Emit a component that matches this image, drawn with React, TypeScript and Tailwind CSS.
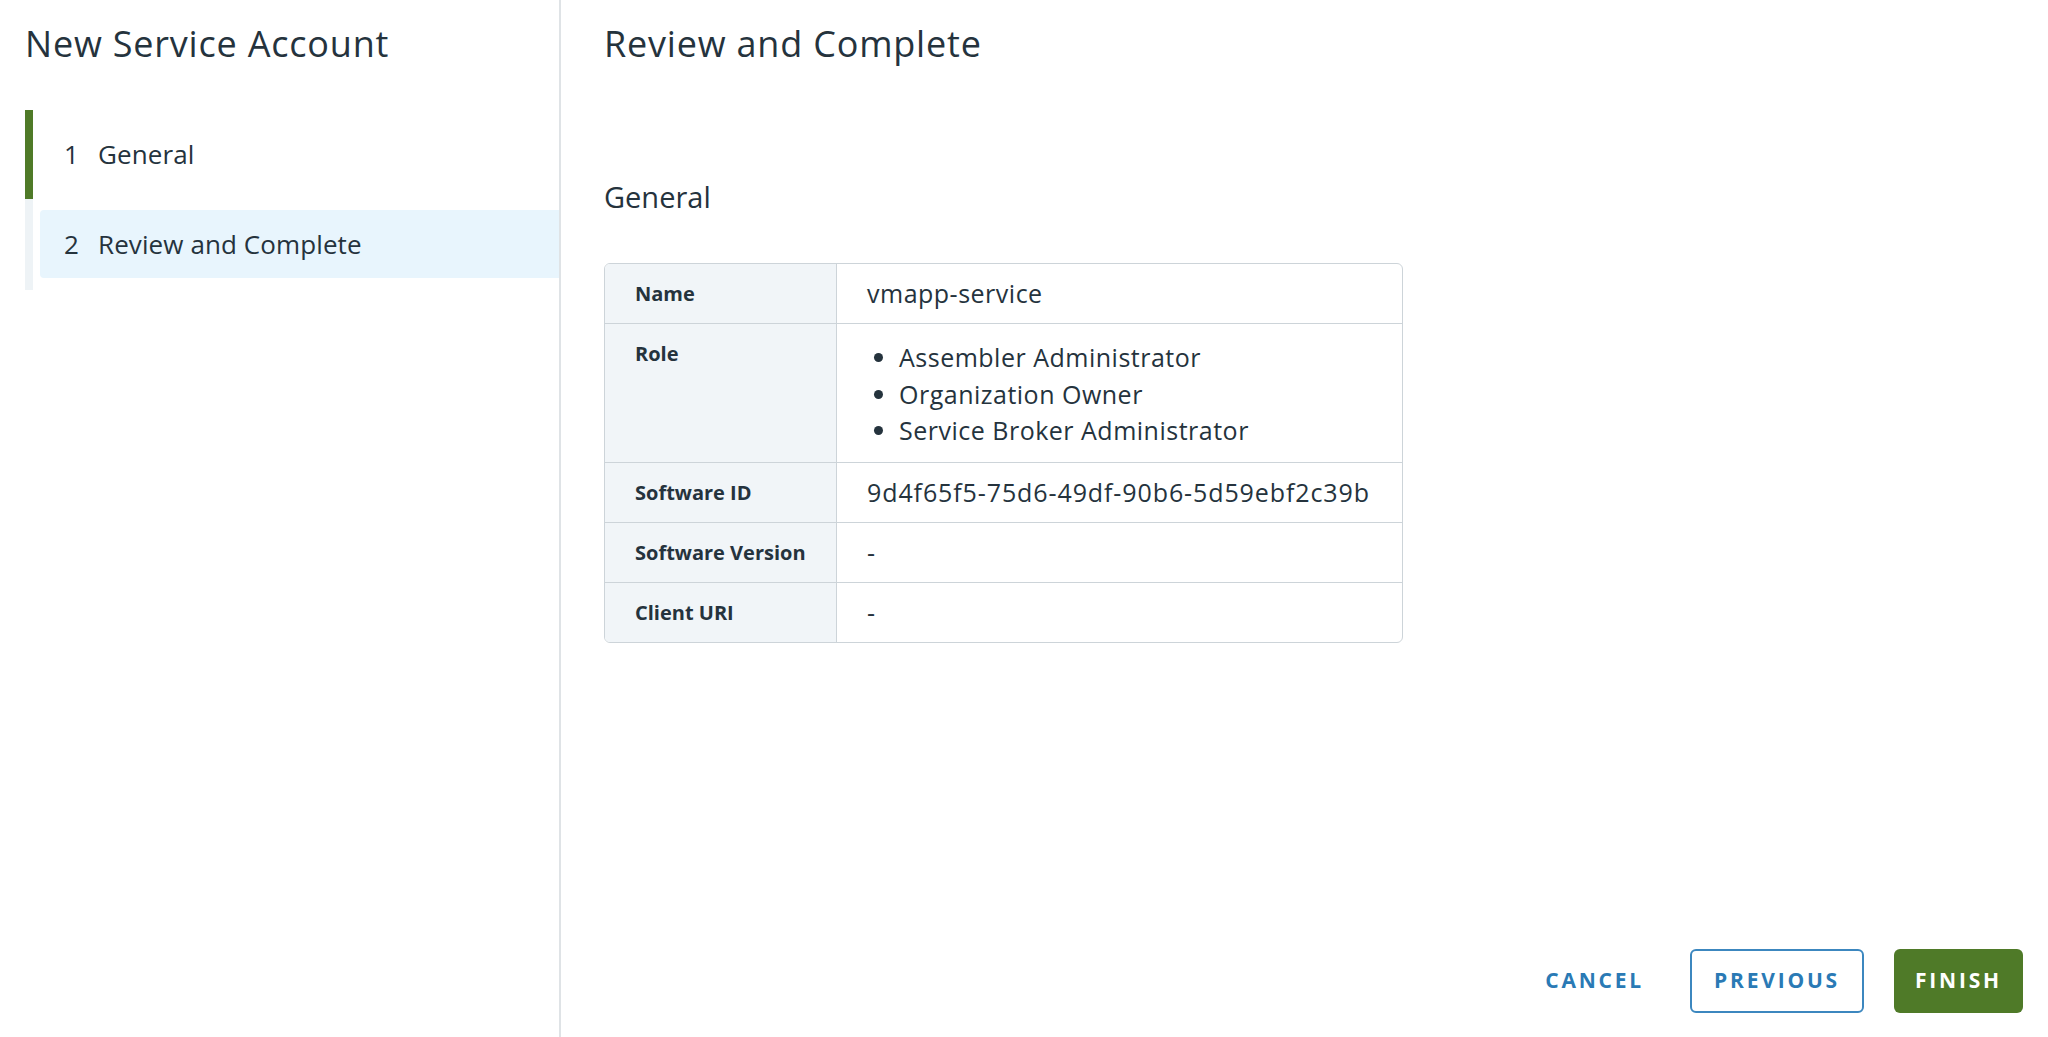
import React from 'react'

const rows: { label: string; value: string | string[] }[] = [
  { label: 'Name', value: 'vmapp-service' },
  {
    label: 'Role',
    value: ['Assembler Administrator', 'Organization Owner', 'Service Broker Administrator'],
  },
  { label: 'Software ID', value: '9d4f65f5-75d6-49df-90b6-5d59ebf2c39b' },
  { label: 'Software Version', value: '-' },
  { label: 'Client URI', value: '-' },
]

function StepNav() {
  return (
    <nav className="mt-[46px] flex flex-col">
      {/* completed step */}
      <div className="flex h-[89px]">
        <div className="w-[8px] shrink-0 bg-[#4f7a28]" />
        <div className="flex items-center pl-[31px] text-[26px] tracking-[0.1px] text-[#25333d]">
          <span className="w-[34px]">1</span>
          <span>General</span>
        </div>
      </div>
      {/* current step */}
      <div className="flex h-[91px]">
        <div className="w-[8px] shrink-0 bg-[#eef3f6]" />
        <div className="flex flex-1 pt-[11px] pb-[12px] pl-[7px]">
          <div className="flex flex-1 items-center rounded-l-[4px] bg-[#e8f5fd] pl-[24px] text-[26px] tracking-[0.1px] text-[#25333d]">
            <span className="w-[34px]">2</span>
            <span>Review and Complete</span>
          </div>
        </div>
      </div>
    </nav>
  )
}

function ReviewTable() {
  return (
    <div className="mt-[48px] w-[799px] overflow-hidden rounded-[6px] border border-[#cdd4d9]">
      {rows.map((row, i) => (
        <div key={row.label} className={`flex ${i > 0 ? 'border-t border-[#cdd4d9]' : ''}`}>
          <div className="w-[232px] shrink-0 border-r border-[#cdd4d9] bg-[#f1f5f8] px-[30px] py-[16px] text-[20px] font-bold leading-[27px] text-[#25333d]">
            {row.label}
          </div>
          <div
            className={`flex-1 px-[30px] py-[16px] text-[25px] leading-[27px] text-[#25333d] ${
              row.label === 'Software ID' ? 'tracking-[0.9px]' : 'tracking-[0.5px]'
            }`}
          >
            {Array.isArray(row.value) ? (
              <ul className="-mt-[1px] mb-[-3px] list-disc pl-[32px]">
                {row.value.map((v) => (
                  <li key={v} className="leading-[36.5px]">
                    {v}
                  </li>
                ))}
              </ul>
            ) : (
              row.value
            )}
          </div>
        </div>
      ))}
    </div>
  )
}

export default function App() {
  return (
    <div className="flex h-[1037px] w-[2048px] bg-white font-['Open_Sans','Liberation_Sans',sans-serif] text-[#25333d]">
      <aside className="w-[561px] shrink-0 border-r-2 border-[#dfe3e6] pt-[24px] pl-[25px]">
        <h1 className="text-[36px] leading-[40px] font-normal tracking-[0.8px]">New Service Account</h1>
        <StepNav />
      </aside>
      <main className="flex flex-1 flex-col pt-[24px] pl-[43px] pr-[25px] pb-[24px]">
        <h2 className="text-[36px] leading-[40px] font-normal tracking-[0.8px]">Review and Complete</h2>
        <h3 className="mt-[115px] text-[29px] leading-[36px] font-normal">General</h3>
        <ReviewTable />
        <div className="mt-auto flex items-center justify-end">
          <button className="h-[64px] px-[24px] text-[21px] font-bold tracking-[2.8px] text-[#2a7ab5]">
            CANCEL
          </button>
          <button className="ml-[22px] h-[64px] w-[174px] rounded-[6px] border-2 border-[#3c87bf] text-[21px] font-bold tracking-[2.8px] text-[#2a7ab5]">
            PREVIOUS
          </button>
          <button className="ml-[30px] h-[64px] w-[129px] rounded-[6px] bg-[#4f7a28] text-[21px] font-bold tracking-[2.8px] text-white">
            FINISH
          </button>
        </div>
      </main>
    </div>
  )
}
